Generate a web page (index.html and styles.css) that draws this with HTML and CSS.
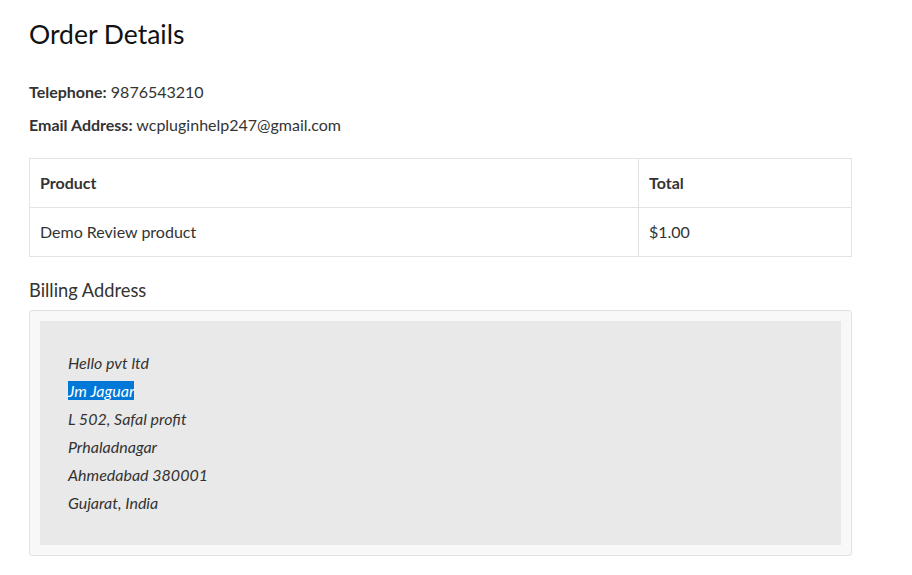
FILE: index.html
```html
<!DOCTYPE html>
<html>
<head>
<meta charset="utf-8">
<link rel="stylesheet" href="styles.css">
</head>
<body>
<div class="page">
  <h2 class="title">Order Details</h2>
  <p class="info"><strong>Telephone:</strong> 9876543210</p>
  <p class="info"><strong>Email Address:</strong> wcpluginhelp247@gmail.com</p>
  <table class="order">
    <thead>
      <tr><th class="col-product">Product</th><th class="col-total">Total</th></tr>
    </thead>
    <tbody>
      <tr><td>Demo Review product</td><td>$1.00</td></tr>
    </tbody>
  </table>
  <h3 class="subtitle">Billing Address</h3>
  <div class="addr-box">
    <address class="addr">
      <span class="line">Hello pvt ltd</span>
      <span class="line"><span class="sel">Jm Jaguar</span></span>
      <span class="line">L 502, Safal profit</span>
      <span class="line">Prhaladnagar</span>
      <span class="line">Ahmedabad 380001</span>
      <span class="line">Gujarat, India</span>
    </address>
  </div>
</div>
</body>
</html>
```
FILE: styles.css
```css
html, body {
  margin: 0;
  padding: 0;
  background: #ffffff;
}
body {
  font-family: Lato, "Liberation Sans", sans-serif;
  font-size: 16px;
  color: #333333;
}
.page {
  padding: 15px 60px 0 29px;
  width: 823px;
}
.title {
  margin: 0 0 28px 0;
  font-size: 26.5px;
  font-weight: 400;
  line-height: 38px;
  color: #111111;
}
.info {
  margin: 0 0 11px 0;
  line-height: 22px;
}
.info strong {
  font-weight: 700;
}
.order {
  width: 823px;
  border-collapse: collapse;
  margin-top: 22px;
  border: 1px solid #e3e3e3;
}
.order th, .order td {
  border: 1px solid #e3e3e3;
  text-align: left;
  padding: 0 10px;
  height: 48px;
  line-height: 20px;
}
.order th {
  font-weight: 700;
}
.col-product {
  width: 588px;
}
.subtitle {
  margin: 20px 0 7px 0;
  font-size: 18.3px;
  font-weight: 400;
  line-height: 26px;
}
.addr-box {
  border: 1px solid #e1e1e1;
  border-radius: 3px;
  background: #f8f8f8;
  padding: 10px;
  width: 801px;
}
.addr {
  display: flex;
  flex-direction: column;
  background: #e9e9e9;
  padding: 28px 28px 28px 28px;
  font-style: italic;
}
.line {
  line-height: 28px;
}
.sel {
  background: #0078d7;
  color: #ffffff;
}
```
